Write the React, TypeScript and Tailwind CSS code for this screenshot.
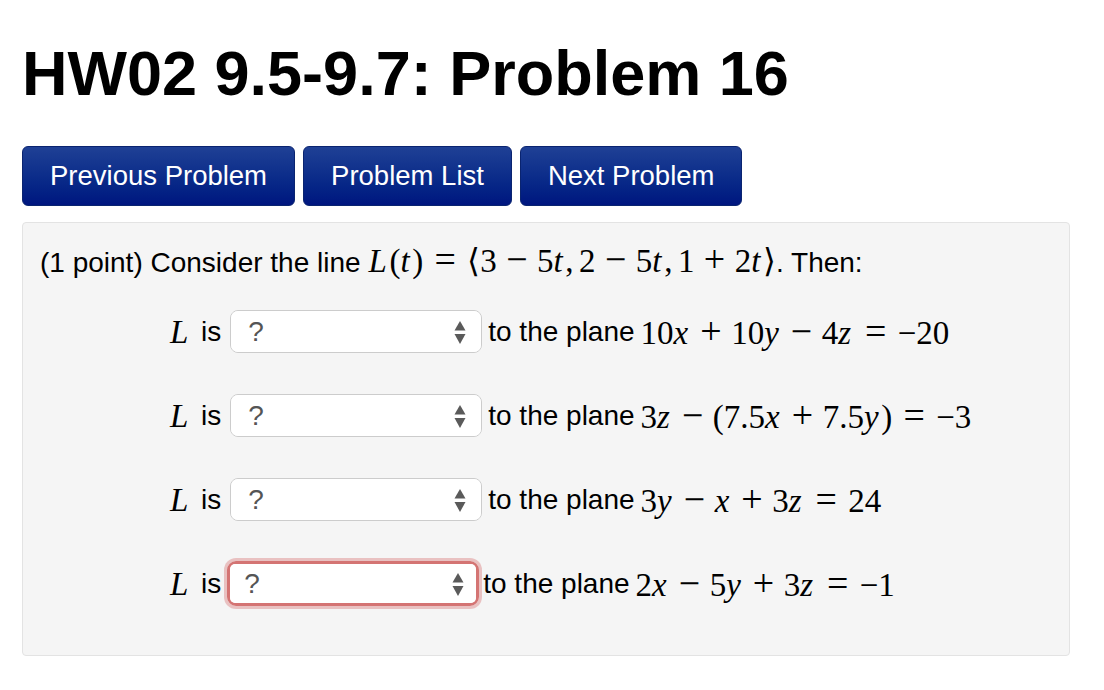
import React from "react";

const sans = { fontFamily: '"Liberation Sans", Arial, sans-serif' };

// MathJax-ish rendering: serif math, wide operators, extra spacing around them
function M({ children }: { children: React.ReactNode }) {
  return (
    <span className="text-[33px] leading-[32px]" style={{ fontFamily: '"Liberation Serif", "Times New Roman", serif' }}>
      {children}
    </span>
  );
}

function V({ children }: { children: React.ReactNode }) {
  return <i className="pr-[0.08em]">{children}</i>;
}

// binary operator
function B({ children }: { children: React.ReactNode }) {
  return (
    <span className="mx-[0.222em] inline-block w-[0.778em] text-center">
      <span className="text-[1.15em] leading-none">{children}</span>
    </span>
  );
}

// relation
function R({ children }: { children: React.ReactNode }) {
  return (
    <span className="mx-[0.278em] inline-block w-[0.778em] text-center">
      <span className="text-[1.15em] leading-none">{children}</span>
    </span>
  );
}

function Select({ error }: { error?: boolean }) {
  return (
    <div
      className={
        error
          ? "ml-[6px] mr-[4px] rounded-[9px] border-[3px] border-[#d47473] shadow-[0_0_0_3px_rgba(220,130,130,0.45)]"
          : "ml-[9px] mr-[6px] rounded-[8px] border border-[#cccccc]"
      }
    >
      <div
        className={
          "flex items-center justify-between bg-white text-[28px] text-[#555] " +
          (error
            ? "h-[39px] w-[246px] rounded-[5px] pl-[14px] pr-[12px]"
            : "h-[41px] w-[250px] rounded-[7px] pl-[17px] pr-[15px]")
        }
      >
        <span>?</span>
        <svg width="12" height="26" viewBox="0 0 12 26">
          <polygon points="6,2 11.5,11.5 0.5,11.5" fill="#5a5a5a" />
          <polygon points="6,25 11.5,15 0.5,15" fill="#5a5a5a" />
        </svg>
      </div>
    </div>
  );
}

function Row({ error, children }: { error?: boolean; children: React.ReactNode }) {
  return (
    <div className="flex h-[43px] items-center text-[28px] text-black">
      <M>
        <V>L</V>
      </M>
      <span className="ml-[10px]">is</span>
      <Select error={error} />
      <span className="mr-[6px]">to the plane</span>
      <M>{children}</M>
    </div>
  );
}

export default function App() {
  return (
    <div className="min-h-[690px] bg-white px-[22px] pt-[33px]" style={sans}>
      <h1 className="text-[63px] font-bold leading-[80px] text-black">HW02 9.5-9.7: Problem 16</h1>

      <div className="mt-[33px] flex gap-[8px]">
        {["Previous Problem", "Problem List", "Next Problem"].map((b) => (
          <button
            key={b}
            className="h-[60px] rounded-[6px] border border-[#0a2470] bg-gradient-to-b from-[#1f4095] to-[#00157f] px-[27px] text-[27.5px] text-white"
          >
            {b}
          </button>
        ))}
      </div>

      <div className="mt-[16px] h-[434px] w-[1048px] rounded-[4px] border border-[#e3e3e3] bg-[#f5f5f5] px-[17px] pt-[18px]">
        <p className="text-[28px] leading-[32px] text-black">
          (1 point) Consider the line{" "}
          <M>
            <V>L</V>(<V>t</V>)<R>=</R>⟨3<B>−</B>5<V>t</V>,<span className="mr-[0.167em]" />2<B>−</B>5<V>t</V>,
            <span className="mr-[0.167em]" />1<B>+</B>2<V>t</V>⟩
          </M>
          . Then:
        </p>

        <div className="ml-[130px] mt-[31px] flex flex-col gap-[41px]">
          <Row>
            10<V>x</V>
            <B>+</B>10<V>y</V>
            <B>−</B>4<V>z</V>
            <R>=</R>−20
          </Row>
          <Row>
            3<V>z</V>
            <B>−</B>(7.5<V>x</V>
            <B>+</B>7.5<V>y</V>)<R>=</R>−3
          </Row>
          <Row>
            3<V>y</V>
            <B>−</B>
            <V>x</V>
            <B>+</B>3<V>z</V>
            <R>=</R>24
          </Row>
          <Row error>
            2<V>x</V>
            <B>−</B>5<V>y</V>
            <B>+</B>3<V>z</V>
            <R>=</R>−1
          </Row>
        </div>
      </div>
    </div>
  );
}
